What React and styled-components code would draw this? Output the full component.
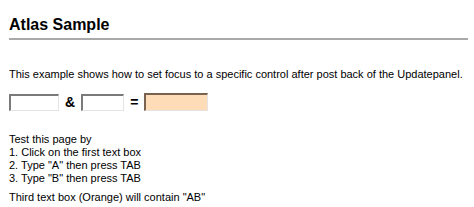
import styled, { createGlobalStyle } from 'styled-components';

const Global = createGlobalStyle`
  html, body {
    margin: 0;
    padding: 0;
    background: #fff;
  }
  body {
    font-family: "Liberation Sans", Arial, sans-serif;
    color: #000;
  }
`

const Page = styled.div`
  padding: 15px 6px 0 9px;
`

const Heading = styled.h1`
  margin: 0;
  font-size: 16px;
  font-weight: bold;
  line-height: 19px;
  padding-bottom: 4px;
  border-bottom: 2px solid #a9a9a9;
`

const Intro = styled.p`
  margin: 28px 0 0 0;
  font-size: 11px;
  line-height: 13px;
`

const Row = styled.div`
  display: flex;
  align-items: center;
  gap: 6px;
  margin-top: 12px;
`

const Box = styled.input`
  box-sizing: border-box;
  width: ${p => p.$w}px;
  height: ${p => p.$h || 17}px;
  margin: 0;
  padding: 1px 2px;
  font-family: inherit;
  font-size: 11px;
  background: ${p => p.$bg || '#fff'};
  border: 1px solid;
  border-color: ${p => p.$dark || '#7a7a7a'} #e4e4e4 #e4e4e4 ${p => p.$dark || '#7a7a7a'};
  border-top-width: 2px;
  border-left-width: 2px;
  outline: none;
`

const Sign = styled.span`
  font-size: 14px;
  font-weight: bold;
  line-height: 17px;
`

const Steps = styled.div`
  margin-top: 22px;
  font-size: 11px;
  line-height: 13px;
`

const Note = styled.p`
  margin: 5px 0 0 0;
  font-size: 11px;
  line-height: 14px;
`

const App = () => {
  return (
    <Page>
      <Global />
      <Heading>Atlas Sample</Heading>
      <Intro>This example shows how to set focus to a specific control after post back of the Updatepanel.</Intro>
      <Row>
        <Box type="text" $w={50} />
        <Sign>&amp;</Sign>
        <Box type="text" $w={43} />
        <Sign>=</Sign>
        <Box type="text" $w={64} $h={18} $bg="#ffdcb8" $dark="#7a6250" />
      </Row>
      <Steps>
        <div>Test this page by</div>
        <div>1. Click on the first text box</div>
        <div>2. Type "A" then press TAB</div>
        <div>3. Type "B" then press TAB</div>
      </Steps>
      <Note>Third text box (Orange) will contain "AB"</Note>
    </Page>
  );
}

export default App;
